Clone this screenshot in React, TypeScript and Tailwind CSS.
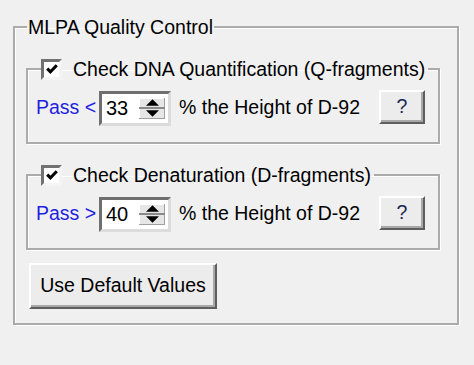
import React from 'react';

const font = "font-['Liberation_Sans',Arial,sans-serif]";

function CheckBox() {
    return (
        <span className="inline-flex h-[21px] w-[21px] shrink-0 items-center justify-center border-[3px] border-t-[#727272] border-l-[#727272] border-r-[#f4f4f4] border-b-[#f4f4f4] bg-white">
            <svg viewBox="0 0 14 14" className="h-[14px] w-[14px]">
                <path d="M2.2 6.6 L5.4 9.9 L11.8 3.2" stroke="#000" strokeWidth="3" fill="none" />
            </svg>
        </span>
    );
}

function SpinBox({ value }: { value: string }) {
    return (
        <div className="flex h-[35px] w-[72px] shrink-0 items-stretch border-[3px] border-t-[#6f6f6f] border-l-[#6f6f6f] border-r-[#dcdcdc] border-b-[#dcdcdc] bg-white">
            <span className="flex-1 pl-[4px] text-[20px] leading-[29px] text-black">{value}</span>
            <div className="my-[4px] mr-[3px] flex w-[26px] flex-col bg-[#e6e6e6] shadow-[inset_-1px_-1px_0_#a0a0a0,inset_1px_1px_0_#fff]">
                <div className="flex flex-1 items-center justify-center">
                    <svg viewBox="0 0 12 6" className="h-[7px] w-[13px]"><path d="M0 6 L6 0 L12 6 Z" fill="#000" /></svg>
                </div>
                <div className="h-[2px] bg-[#8a8a8a]" />
                <div className="flex flex-1 items-center justify-center">
                    <svg viewBox="0 0 12 6" className="h-[7px] w-[13px]"><path d="M0 0 L12 0 L6 6 Z" fill="#000" /></svg>
                </div>
            </div>
        </div>
    );
}

function WinButton({ children, className }: { children: React.ReactNode; className?: string }) {
    return (
        <button className={`flex items-center justify-center border-2 border-t-white border-l-white border-r-[#5e5e5e] border-b-[#5e5e5e] bg-[#ececec] text-[19.5px] text-black shadow-[inset_-2px_-2px_0_#a8a8a8] ${className ?? ''}`}>
            {children}
        </button>
    );
}

function CheckGroup({ title, op, value }: { title: string; op: string; value: string }) {
    return (
        <fieldset className="w-[414px] border-2 border-[#ababab] pb-[16px] pl-[8px] shadow-[1px_1px_0_#fff,inset_1px_1px_0_#fff]">
            <legend className="ml-[5px] flex h-[22px] items-center gap-[11px] pr-[3px]">
                <CheckBox />
                <span className="text-[19.5px] leading-[22px] text-black">{title}</span>
            </legend>
            <div className="mt-[10px] flex h-[36px] items-center">
                <span className="w-[63px] text-[19.5px] text-[#1f1fe0]">Pass {op}</span>
                <SpinBox value={value} />
                <span className="ml-[8px] w-[200px] text-[19.5px] text-black">% the Height of D-92</span>
                <WinButton className="mb-[2px] h-[34px] w-[46px]">
                    <span className="text-[#1b2a55]">?</span>
                </WinButton>
            </div>
        </fieldset>
    );
}

export default function App() {
    return (
        <div className={`h-[365px] w-[474px] overflow-hidden bg-[#f0f0f0] pt-[16px] ${font}`}>
            <fieldset className="ml-[13px] w-[446px] border-2 border-[#ababab] pb-[14px] pl-[11px] shadow-[1px_1px_0_#fff,inset_1px_1px_0_#fff]">
                <legend className="ml-[1px] h-[22px] px-[1px] text-[19.5px] leading-[22px] text-black">MLPA Quality Control</legend>
                <div className="mt-[20px]">
                    <CheckGroup title="Check DNA Quantification (Q-fragments)" op="<" value="33" />
                </div>
                <div className="mt-[20px]">
                    <CheckGroup title="Check Denaturation (D-fragments)" op=">" value="40" />
                </div>
                <WinButton className="ml-[3px] mt-[13px] h-[46px] w-[188px]">Use Default Values</WinButton>
            </fieldset>
        </div>
    );
}
